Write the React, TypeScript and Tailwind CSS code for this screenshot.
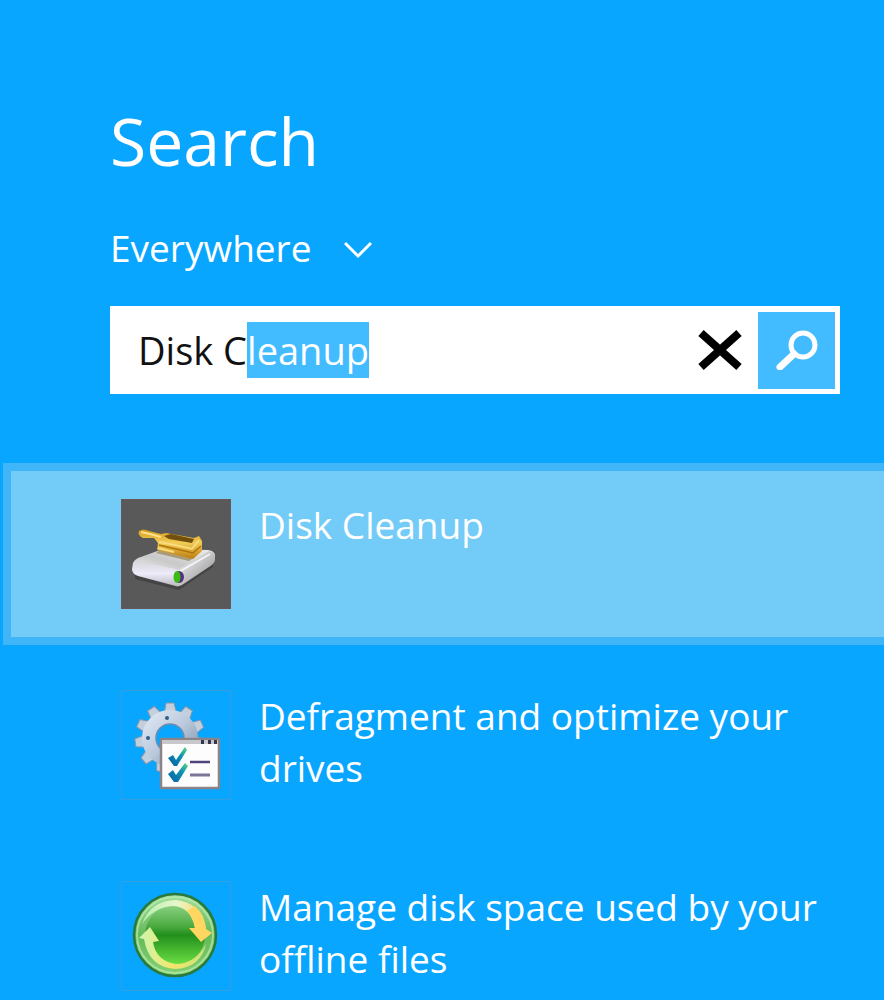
import { useEffect, useRef, useState } from "react";
import type { ReactNode } from "react";

function ChevronIcon() {
  return (
    <svg viewBox="0 0 28 18" className="mt-1 h-[18px] w-7" fill="none" stroke="currentColor" strokeWidth="3">
      <path d="M1 2 L14 15 L27 2" />
    </svg>
  );
}

function ClearIcon() {
  return (
    <svg viewBox="0 0 44 40" className="h-10 w-11" fill="none" stroke="currentColor" strokeWidth="8">
      <path d="M3 3 L41 37 M41 3 L3 37" />
    </svg>
  );
}

function SearchIcon() {
  return (
    <svg viewBox="0 0 42 40" className="h-10 w-[42px]" fill="none" stroke="currentColor">
      <circle cx="27" cy="15" r="12" strokeWidth="5" />
      <path d="M18 24 L4 37" strokeWidth="7" strokeLinecap="round" />
    </svg>
  );
}

function DiskCleanupIcon() {
  return (
    <svg viewBox="0 0 108 108" className="size-full">
      <defs>
        <linearGradient id="driveTop" x1="0" y1="1" x2="1" y2="0">
          <stop offset="0" stopColor="#f3f3f5" />
          <stop offset="0.45" stopColor="#c9c9c9" />
          <stop offset="1" stopColor="#efefef" />
        </linearGradient>
        <linearGradient id="driveSide" x1="0" y1="0" x2="1" y2="1">
          <stop offset="0" stopColor="#ffffff" />
          <stop offset="0.5" stopColor="#c4c4c6" />
          <stop offset="1" stopColor="#858585" />
        </linearGradient>
        <linearGradient id="driveFront" x1="0" y1="0" x2="0" y2="1">
          <stop offset="0" stopColor="#d6d5dc" />
          <stop offset="0.5" stopColor="#eeebfa" />
          <stop offset="1" stopColor="#bcbac4" />
        </linearGradient>
        <linearGradient id="brush" x1="0" y1="0" x2="0" y2="1">
          <stop offset="0" stopColor="#d49a1c" />
          <stop offset="0.45" stopColor="#f2cd58" />
          <stop offset="1" stopColor="#bd7c0d" />
        </linearGradient>
      </defs>
      <path d="M13 75 L55 87 L91 64 L91 67 L57 90 L13 79 Z" fill="#444444" />
      <path d="M11 63 Q12 60 16 58 L41 49 L86 50 Q93 51 93 56 L92 61 L55 73 Z" fill="url(#driveTop)" />
      <path d="M54 71 L87 51 Q94 52 93 60 Q92 64 87 67 L60 85 Q56 87 54 86 Z" fill="url(#driveSide)" />
      <path d="M57 72 L88 54" stroke="#ffffff" strokeWidth="2" opacity="0.8" />
      <path d="M11 63 Q13 60 20 62 L53 69 Q61 71 60 79 Q59 86 54 86 L16 76 Q10 74 10 69 Z" fill="url(#driveFront)" />
      <ellipse cx="57" cy="77" rx="5" ry="6" fill="#56317e" />
      <ellipse cx="55" cy="77" rx="3.5" ry="6" fill="#3cbd14" />
      <path d="M34 53 L40 49 L73 57 L67 61 Z" fill="#8f7437" opacity="0.6" />
      <path d="M17 31 Q21 28 27 31 L39 34 L44 33 L72 38 L77 36 L80 41 L80 51 L71 59 L35 50 L36 43 L32 38 L21 38 Q15 35 17 31 Z" fill="url(#brush)" />
      <path d="M42 36 L49 34 L72 39 L70 43 L47 39 Z" fill="#73500b" />
      <path d="M37 42 L53 45 L70 49 L77 40 M36 48 L52 52" stroke="#f8dc7d" strokeWidth="2" fill="none" />
      <path d="M37 45 L71 53 L79 46" stroke="#b17309" strokeWidth="1.5" fill="none" />
      <path d="M19 32 L28 34 L39 37" stroke="#ffe28a" strokeWidth="2" fill="none" />
    </svg>
  );
}

const GEAR_TEETH = [0, 33, 66, 99, 131, 164, 196, 229, 262, 295, 327];

function DefragmentIcon() {
  return (
    <svg viewBox="0 0 108 108" className="size-full">
      <defs>
        <linearGradient id="gear" x1="0" y1="0" x2="1" y2="1">
          <stop offset="0" stopColor="#dbe4f0" />
          <stop offset="0.5" stopColor="#bac9dc" />
          <stop offset="1" stopColor="#8498b0" />
        </linearGradient>
        <linearGradient id="tick" x1="0" y1="1" x2="1" y2="0">
          <stop offset="0" stopColor="#075f9f" />
          <stop offset="0.6" stopColor="#0d91b5" />
          <stop offset="1" stopColor="#5cdc75" />
        </linearGradient>
      </defs>
      <g fill="#c3cfdd" stroke="#8296ac" strokeWidth="1">
        {GEAR_TEETH.map((angle) => (
          <path key={angle} d="M42 24 L44 12 L52 12 L55 24 Z" transform={`rotate(${angle} 48 47)`} />
        ))}
      </g>
      <circle cx="48" cy="47" r="21" fill="none" stroke="url(#gear)" strokeWidth="14" />
      <circle cx="48" cy="47" r="14" fill="none" stroke="#6e8daf" strokeWidth="1.5" />
      <circle cx="45" cy="27" r="2" fill="#315f8d" />
      <circle cx="26" cy="47" r="2" fill="#315f8d" />
      <rect x="39" y="48" width="58" height="49" rx="1" fill="#fdfdfd" stroke="#8a8488" strokeWidth="2.5" />
      <path d="M40 49 H96 V53 H40 Z" fill="#c8c8cc" />
      <path d="M79 51 h3 M86 51 h3 M92 51 h3" stroke="#33364d" strokeWidth="4" />
      <path d="M46 67 L51 64 L54 69 L63 56 L65 59 L55 75 L52 75 Z" fill="url(#tick)" />
      <path d="M46 83 L51 79 L54 84 L63 72 L66 75 L56 91 L52 91 Z" fill="url(#tick)" />
      <path d="M68 71 H88" stroke="#51447c" strokeWidth="2.5" />
      <path d="M68 84 H88" stroke="#7d749a" strokeWidth="3" />
    </svg>
  );
}

function OfflineFilesIcon() {
  return (
    <svg viewBox="0 0 108 108" className="size-full">
      <defs>
        <linearGradient id="rim" x1="0" y1="0" x2="0" y2="1">
          <stop offset="0" stopColor="#a4dfa0" />
          <stop offset="0.5" stopColor="#64b95a" />
          <stop offset="1" stopColor="#86d176" />
        </linearGradient>
        <linearGradient id="core" x1="0" y1="0" x2="0" y2="1">
          <stop offset="0" stopColor="#8cd183" />
          <stop offset="0.35" stopColor="#4cab41" />
          <stop offset="0.5" stopColor="#228f1c" />
          <stop offset="1" stopColor="#6ce044" />
        </linearGradient>
        <linearGradient id="arcTop" x1="0" y1="0" x2="1" y2="0">
          <stop offset="0" stopColor="#b8edb0" />
          <stop offset="0.55" stopColor="#e7f7cb" />
          <stop offset="1" stopColor="#ffd55d" />
        </linearGradient>
        <linearGradient id="arcBottom" x1="0" y1="0" x2="1" y2="0">
          <stop offset="0" stopColor="#c9f7b0" />
          <stop offset="0.5" stopColor="#f5e56d" />
          <stop offset="1" stopColor="#c9e577" />
        </linearGradient>
      </defs>
      <circle cx="53" cy="53" r="41" fill="url(#rim)" stroke="#28793b" strokeWidth="2.5" />
      <circle cx="53" cy="53" r="38" fill="none" stroke="#b9edad" strokeWidth="2" opacity="0.7" />
      <circle cx="53" cy="53" r="30" fill="url(#core)" />
      <path d="M20 42 Q29 18 54 18 Q78 20 84 46 L73 46 Q69 25 51 24 Q32 25 20 42 Z" fill="url(#arcTop)" />
      <path d="M67 46 L73 46 Q71 35 65 29 L73 24 Q83 33 84 47 L90 51 L79 60 Z" fill="#ffd65f" />
      <path d="M17 56 L28 45 L37 59 L31 60 Q34 79 54 82 Q73 82 84 62 Q79 85 54 87 Q27 86 22 57 Z" fill="url(#arcBottom)" />
    </svg>
  );
}

interface ResultProps {
  icon: ReactNode;
  label: string;
  selected?: boolean;
}

function Result({ icon, label, selected = false }: ResultProps) {
  return (
    <li>
      <a
        href="#"
        className={
          selected
            ? "flex h-[182px] items-start gap-7 border-8 border-r-0 border-[#40b5f8] bg-[#73cbf8] pl-[110px] pt-7"
            : "flex h-[182px] items-start gap-7 border-8 border-r-0 border-transparent pl-[110px] pt-7"
        }
      >
        <span
          className={
            selected
              ? "size-[110px] shrink-0 border border-[#6c5552] bg-[#595959]"
              : "size-[110px] shrink-0 border border-[#339fdd]"
          }
        >
          {icon}
        </span>
        <span className="max-w-[600px] text-[37px] leading-[52px]">{label}</span>
      </a>
    </li>
  );
}

export default function App() {
  const [query, setQuery] = useState("Disk Cleanup");
  const inputRef = useRef<HTMLInputElement>(null);

  useEffect(() => {
    inputRef.current?.focus();
    inputRef.current?.setSelectionRange(6, 12);
  }, []);

  return (
    <main className="h-screen overflow-hidden bg-[#08a6ff] pt-24 font-['Open_Sans',sans-serif] text-white">
      <div className="pl-[110px] pr-11">
        <h1 className="text-[66px] leading-[88px]">Search</h1>
        <button type="button" className="mt-[38px] flex items-center gap-8 text-[37px] leading-[52px]">
          Everywhere
          <ChevronIcon />
        </button>
        <form className="mt-8 flex h-[88px] items-center bg-white pr-[5px]" onSubmit={(e) => e.preventDefault()}>
          <input
            ref={inputRef}
            type="text"
            aria-label="Search everywhere"
            value={query}
            onChange={(e) => setQuery(e.target.value)}
            className="h-14 min-w-0 flex-1 pl-7 text-[38px] leading-[56px] text-[#111] outline-none selection:bg-[#42bbff] selection:text-white"
          />
          <button type="button" aria-label="Clear" className="mr-4 text-black" onClick={() => setQuery("")}>
            <ClearIcon />
          </button>
          <button type="submit" aria-label="Search" className="flex size-[77px] items-center justify-center bg-[#42bbff]">
            <SearchIcon />
          </button>
        </form>
      </div>
      <ul className="mt-[69px] flex flex-col gap-[9px] pl-[3px]">
        <Result icon={<DiskCleanupIcon />} label="Disk Cleanup" selected />
        <Result icon={<DefragmentIcon />} label="Defragment and optimize your drives" />
        <Result icon={<OfflineFilesIcon />} label="Manage disk space used by your offline files" />
      </ul>
    </main>
  );
}
